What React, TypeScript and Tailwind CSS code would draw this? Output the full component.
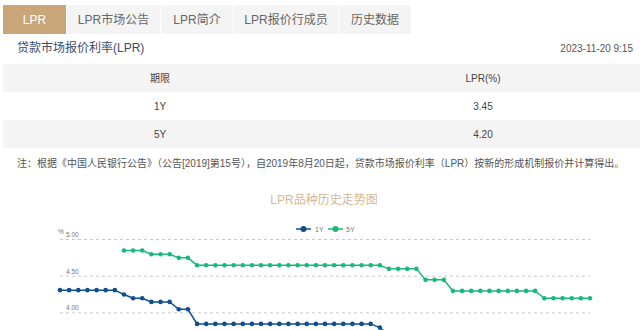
import React from 'react';

const tabs = [
  { name: 'LPR', w: 'w-[63px]', active: true },
  { name: 'LPR市场公告', w: 'w-[93px]', active: false },
  { name: 'LPR简介', w: 'w-[72px]', active: false },
  { name: 'LPR报价行成员', w: 'w-[104px]', active: false },
  { name: '历史数据', w: 'w-[72px]', active: false },
];

const rows = [
  { term: '期限', rate: 'LPR(%)', gray: true },
  { term: '1Y', rate: '3.45', gray: false },
  { term: '5Y', rate: '4.20', gray: true },
];

// monthly values from 2019-01 to 2023-11
const fill = (v: number, n: number) => Array(n).fill(v) as number[];
const oneYear: number[] = [
  ...fill(4.31, 7),
  4.25,
  ...fill(4.2, 2),
  ...fill(4.15, 3),
  ...fill(4.05, 2),
  ...fill(3.85, 20),
  3.8,
  ...fill(3.7, 7),
  ...fill(3.65, 10),
  ...fill(3.55, 2),
  ...fill(3.45, 4),
];
const fiveYear: (number | null)[] = [
  ...Array(7).fill(null),
  ...fill(4.85, 3),
  ...fill(4.8, 3),
  ...fill(4.75, 2),
  ...fill(4.65, 21),
  ...fill(4.6, 4),
  ...fill(4.45, 3),
  ...fill(4.3, 10),
  ...fill(4.2, 6),
];

const px = (i: number) => 60 + i * (530 / 58);
const py = (v: number) => 17.5 + (5 - v) * 73.4;

function Series({ data, color }: { data: (number | null)[]; color: string }) {
  const pts = data
    .map((v, i) => (v === null ? null : [px(i), py(v)]))
    .filter((p): p is number[] => p !== null);
  return (
    <g>
      <polyline
        points={pts.map((p) => p.join(',')).join(' ')}
        fill="none"
        stroke={color}
        strokeWidth={1.5}
      />
      {pts.map((p, i) => (
        <circle key={i} cx={p[0]} cy={p[1]} r={2.3} fill={color} />
      ))}
    </g>
  );
}

export default function App() {
  return (
    <div
      className="w-[640px] h-[330px] overflow-hidden bg-white"
      style={{ fontFamily: '"Liberation Sans", "Noto Sans CJK SC", sans-serif' }}
    >
      {/* tabs */}
      <div className="flex gap-px pl-[3px] pt-[5px]">
        {tabs.map((t) => (
          <div
            key={t.name}
            className={`${t.w} h-[29px] flex items-center justify-center text-[12px] ${
              t.active ? 'bg-[#c9a679] text-white' : 'bg-[#f4f4f4] text-[#666]'
            }`}
          >
            {t.name}
          </div>
        ))}
      </div>

      {/* title */}
      <div className="h-[28px] flex items-center justify-between pl-[17px] pr-[7px]">
        <span className="text-[12px] text-[#3d4b6b]">贷款市场报价利率(LPR)</span>
        <span className="text-[10px] text-[#555]">2023-11-20 9:15</span>
      </div>

      {/* table */}
      <div className="mt-[2px] ml-[3px]">
        {rows.map((r) => (
          <div
            key={r.term}
            className={`h-[28px] flex items-center text-[10px] text-[#444] ${r.gray ? 'bg-[#f4f4f4]' : 'bg-white'}`}
          >
            <div className="w-[314px] text-center">{r.term}</div>
            <div className="flex-1 text-center pl-[9px]">{r.rate}</div>
          </div>
        ))}
      </div>

      {/* note */}
      <div className="h-[30px] flex items-center pl-[17px] text-[10px] text-[#555] whitespace-nowrap">
        注：根据《中国人民银行公告》（公告[2019]第15号），自2019年8月20日起，贷款市场报价利率（LPR）按新的形成机制报价并计算得出。
      </div>

      {/* chart */}
      <div className="h-[44px] flex items-center justify-center pl-[8px] text-[12px] text-[#d6b892]">
        LPR品种历史走势图
      </div>
      <svg width={640} height={108} className="block">
        {/* legend */}
        <line x1={296} y1={7} x2={311} y2={7} stroke="#0d4f91" strokeWidth={1.5} />
        <circle cx={303.5} cy={7} r={3} fill="#0d4f91" />
        <text x={315} y={9.5} fontSize={7} fill="#777">1Y</text>
        <line x1={328} y1={7} x2={343} y2={7} stroke="#1bb77b" strokeWidth={1.5} />
        <circle cx={335.5} cy={7} r={3} fill="#1bb77b" />
        <text x={346} y={9.5} fontSize={7} fill="#777">5Y</text>

        {/* grid */}
        {[5, 4.5, 4].map((v) => (
          <g key={v}>
            <line
              x1={60}
              y1={py(v)}
              x2={590}
              y2={py(v)}
              stroke="#c8c8c8"
              strokeWidth={1}
              strokeDasharray="3 3"
            />
            <text x={66} y={py(v) - 2.5} fontSize={6.5} fill="#777">
              {v.toFixed(2)}
            </text>
          </g>
        ))}
        <text x={58} y={12} fontSize={6.5} fill="#777">%</text>

        <Series data={fiveYear} color="#1bb77b" />
        <Series data={oneYear} color="#0d4f91" />
      </svg>
    </div>
  );
}
